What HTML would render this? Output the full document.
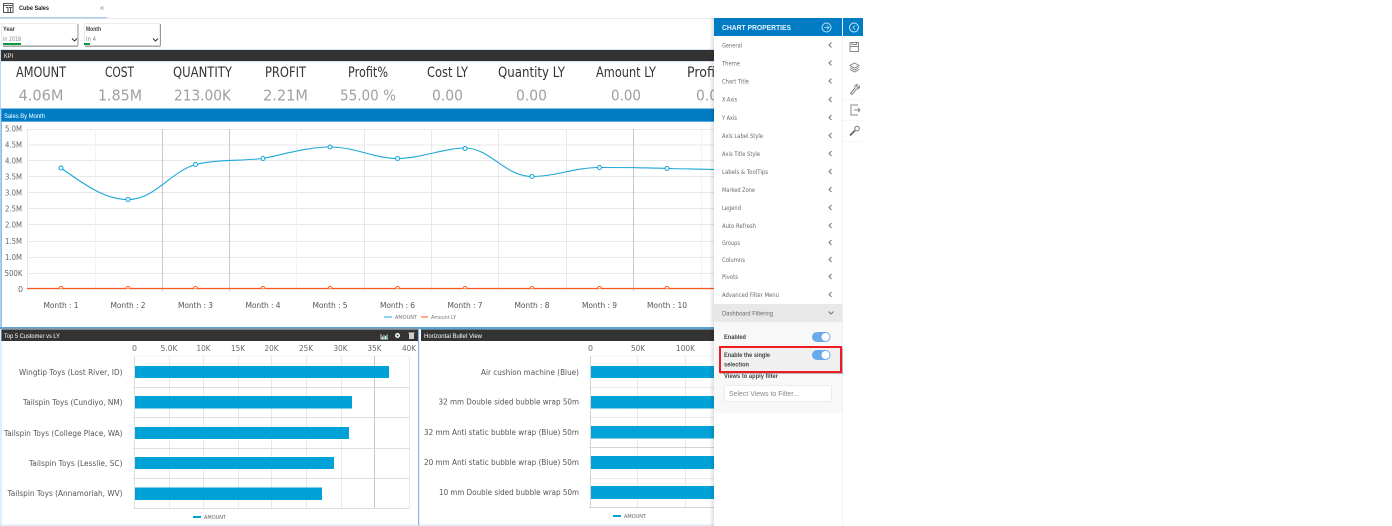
<!DOCTYPE html>
<html><head><meta charset="utf-8"><style>
html,body{margin:0;padding:0;background:#fff;width:1392px;height:526px;overflow:hidden}
svg{display:block;filter:blur(.3px)}
text{font-family:"DejaVu Sans","Liberation Sans",sans-serif}
.k{font-size:14px;fill:#333}
.v{font-size:15px;fill:#a0a0a0}
.y{font-size:8px;fill:#666}
.m{font-size:7.5px;fill:#555}
.l{font-size:8px;fill:#555}
.a{font-size:8px;fill:#666}
.p{font-size:6.5px;fill:#6a6a6a;font-family:"Liberation Sans",sans-serif}
.h{font-size:6.5px;fill:#fff;font-family:"Liberation Sans",sans-serif}
.b{font-size:6.5px;fill:#444;font-weight:bold;font-family:"Liberation Sans",sans-serif}
.g0{stroke:#f3f3f3;stroke-width:1;fill:none}
.g1{stroke:#e8e8e8;stroke-width:1;fill:none}
.g2{stroke:#c8c8c8;stroke-width:1;fill:none}
.ch{fill:none;stroke:#777;stroke-width:1}
.ic{fill:none;stroke:#888;stroke-width:1}
</style></head><body>
<svg width="1392" height="526" viewBox="0 0 1392 526" xmlns="http://www.w3.org/2000/svg">
<defs>
<linearGradient id="sh" x1="0" x2="1" y1="0" y2="0"><stop offset="0" stop-color="#000" stop-opacity="0"/><stop offset="1" stop-color="#000" stop-opacity=".12"/></linearGradient>
<clipPath id="kc"><rect x="0" y="60" width="714" height="50"/></clipPath>
</defs>
<rect width="1392" height="526" fill="#fff"/>

<!-- tab strip -->
<rect x="0" y="18" width="714" height="1" fill="#e8e8e8"/>
<rect x="0" y="17" width="107" height="1.4" fill="#a9cdf0"/>
<path d="M3.5 3.5H13V12.5H3.5Z M3.5 5.5H13 M6 7.5H8V12 M9 7.5H12 M10.5 7.5V12" fill="none" stroke="#555" stroke-width="1"/>
<text x="19" y="10" font-size="6.5" font-weight="bold" fill="#222" textLength="30" lengthAdjust="spacingAndGlyphs" style="font-family:'Liberation Sans',sans-serif">Cube Sales</text>
<path d="M100.5 6.5l3 3m0-3l-3 3" stroke="#bbb" stroke-width="1"/>

<!-- filters -->
<rect x="1.5" y="23.5" width="76" height="22" fill="#fff" stroke="#e2e2e2" stroke-width=".6"/>
<path d="M78 24V45.500" fill="none" stroke="#999" stroke-width="1"/>
<rect x="3" y="45.500" width="75" height="1.500" fill="#aaa"/>
<text x="3" y="31" class="b" textLength="12" lengthAdjust="spacingAndGlyphs">Year</text>
<text x="3" y="41" font-size="6" fill="#888" textLength="18" lengthAdjust="spacingAndGlyphs">In 2018</text>
<rect x="3" y="43" width="18" height="2" fill="#109a46"/>
<path d="M72 38.500l2.500 2.500 2.500-2.500" fill="none" stroke="#333" stroke-width="1"/>
<rect x="84.500" y="23.500" width="75" height="22" fill="#fff" stroke="#e2e2e2" stroke-width=".6"/>
<path d="M160.500 24V45.500" fill="none" stroke="#999" stroke-width="1"/>
<rect x="85" y="45.500" width="75.500" height="1.500" fill="#aaa"/>
<text x="86" y="31" class="b" textLength="15" lengthAdjust="spacingAndGlyphs">Month</text>
<text x="86" y="41" font-size="6" fill="#888" textLength="10" lengthAdjust="spacingAndGlyphs">In 4</text>
<rect x="84" y="43" width="6" height="2" fill="#109a46"/>
<path d="M153 38.500l2.500 2.500 2.500-2.500" fill="none" stroke="#333" stroke-width="1"/>

<!-- KPI -->
<rect x="0" y="49.500" width="714" height="1" fill="#a9cdf0"/>
<rect x="1" y="50" width="713" height="11" fill="#333"/>
<rect x="0" y="61" width="714" height="1" fill="#cfe3f6"/>
<rect x="0" y="50" width="1" height="60" fill="#bcd9f3"/>
<text x="4" y="58" class="h" textLength="9" lengthAdjust="spacingAndGlyphs">KPI</text>
<g clip-path="url(#kc)">
<text x="16" y="77" class="k" textLength="50" lengthAdjust="spacingAndGlyphs">AMOUNT</text>
<text x="105" y="77" class="k" textLength="29" lengthAdjust="spacingAndGlyphs">COST</text>
<text x="173" y="77" class="k" textLength="59" lengthAdjust="spacingAndGlyphs">QUANTITY</text>
<text x="265" y="77" class="k" textLength="41" lengthAdjust="spacingAndGlyphs">PROFIT</text>
<text x="348" y="77" class="k" textLength="40" lengthAdjust="spacingAndGlyphs">Profit%</text>
<text x="427" y="77" class="k" textLength="41" lengthAdjust="spacingAndGlyphs">Cost LY</text>
<text x="498" y="77" class="k" textLength="67" lengthAdjust="spacingAndGlyphs">Quantity LY</text>
<text x="596" y="77" class="k" textLength="60" lengthAdjust="spacingAndGlyphs">Amount LY</text>
<text x="687" y="77" class="k" textLength="50" lengthAdjust="spacingAndGlyphs">Profit LY</text>
<text x="18.500" y="100.500" class="v" textLength="45" lengthAdjust="spacingAndGlyphs">4.06M</text>
<text x="98" y="100.500" class="v" textLength="44" lengthAdjust="spacingAndGlyphs">1.85M</text>
<text x="174" y="100.500" class="v" textLength="57" lengthAdjust="spacingAndGlyphs">213.00K</text>
<text x="263" y="100.500" class="v" textLength="45" lengthAdjust="spacingAndGlyphs">2.21M</text>
<text x="340" y="100.500" class="v" textLength="56" lengthAdjust="spacingAndGlyphs">55.00 %</text>
<text x="432" y="100.500" class="v" textLength="31" lengthAdjust="spacingAndGlyphs">0.00</text>
<text x="516" y="100.500" class="v" textLength="31" lengthAdjust="spacingAndGlyphs">0.00</text>
<text x="611" y="100.500" class="v" textLength="30" lengthAdjust="spacingAndGlyphs">0.00</text>
<text x="696" y="100.500" class="v" textLength="31" lengthAdjust="spacingAndGlyphs">0.00</text>
</g>

<!-- Sales by month -->
<rect x="0" y="108" width="714" height="1" fill="#8ec1ea"/>
<rect x="1" y="109" width="713" height="12" fill="#007cc5"/>
<rect x="1" y="121" width="713" height="1" fill="#5aa9e0"/>
<rect x="0.500" y="109" width="1.200" height="219" fill="#5aa5dc"/>
<text x="4" y="118" class="h" textLength="41" lengthAdjust="spacingAndGlyphs">Sales By Month</text>
<path class="g1" d="M27 129.500H714M27 145H714M27 160.500H714M27 176.500H714M27 192.500H714M27 208.500H714M27 224.500H714M27 241.500H714M27 257.500H714M27 273.500H714"/>
<path class="g0" d="M27 289.500H714M95.500 129V291M296.500 129V291M701.500 129V291"/>
<path class="g1" d="M27.500 129V291M364.500 129V291M431.500 129V291M498.500 129V291M566.500 129V291"/>
<path class="g2" d="M162.500 129V291M229.500 129V291M633.500 129V291"/>
<g class="y">
<text x="5" y="131.500" textLength="17" lengthAdjust="spacingAndGlyphs">5.0M</text>
<text x="5" y="147.500" textLength="17" lengthAdjust="spacingAndGlyphs">4.5M</text>
<text x="5" y="163.500" textLength="17" lengthAdjust="spacingAndGlyphs">4.0M</text>
<text x="5" y="179.500" textLength="17" lengthAdjust="spacingAndGlyphs">3.5M</text>
<text x="5" y="195.500" textLength="17" lengthAdjust="spacingAndGlyphs">3.0M</text>
<text x="5" y="211.500" textLength="17" lengthAdjust="spacingAndGlyphs">2.5M</text>
<text x="5" y="227.500" textLength="17" lengthAdjust="spacingAndGlyphs">2.0M</text>
<text x="5" y="244" textLength="17" lengthAdjust="spacingAndGlyphs">1.5M</text>
<text x="5" y="260" textLength="17" lengthAdjust="spacingAndGlyphs">1.0M</text>
<text x="4.500" y="276" textLength="18" lengthAdjust="spacingAndGlyphs">500K</text>
<text x="18" y="292" textLength="5" lengthAdjust="spacingAndGlyphs">0</text>
</g>
<path d="M61 168C85 185 105 199.500 128 199.500C155 199.500 170 172 195.500 164.500C215 159.500 240 161 263 158.500C285 154 308 147 330 147C355 147 375 158.500 397.500 158.500C420 158.500 445 148 465 148C490 148 505 176.500 532 176.500C555 176.500 575 167.500 599.500 167.500C625 167.500 645 167.500 667 168.500C685 169 700 169 714 169.500" fill="none" stroke="#1ba7d8" stroke-width="1.100"/>
<g fill="#fff" stroke="#0fa3d6" stroke-width="1">
<circle cx="61" cy="168" r="2"/><circle cx="128" cy="199.500" r="2"/><circle cx="195.500" cy="164.500" r="2"/><circle cx="263" cy="158.500" r="2"/><circle cx="330" cy="147" r="2"/><circle cx="397.500" cy="158.500" r="2"/><circle cx="465" cy="148.500" r="2"/><circle cx="532" cy="176.500" r="2"/><circle cx="599.500" cy="167.500" r="2"/><circle cx="667" cy="168.500" r="2"/>
</g>
<path d="M27 288.500H714" stroke="#fb5a1e" stroke-width="1.200"/>
<g fill="#fff" stroke="#fb5a1e" stroke-width="1">
<path d="M59 288.500a2 2 0 0 1 4 0M126 288.500a2 2 0 0 1 4 0M193.500 288.500a2 2 0 0 1 4 0M261 288.500a2 2 0 0 1 4 0M328 288.500a2 2 0 0 1 4 0M395.500 288.500a2 2 0 0 1 4 0M463 288.500a2 2 0 0 1 4 0M530 288.500a2 2 0 0 1 4 0M597.500 288.500a2 2 0 0 1 4 0M665 288.500a2 2 0 0 1 4 0"/>
</g>
<g class="m">
<text x="43.500" y="308" textLength="35" lengthAdjust="spacing">Month : 1</text>
<text x="110.500" y="308" textLength="35" lengthAdjust="spacing">Month : 2</text>
<text x="178" y="308" textLength="35" lengthAdjust="spacing">Month : 3</text>
<text x="245.500" y="308" textLength="35" lengthAdjust="spacing">Month : 4</text>
<text x="312.500" y="308" textLength="35" lengthAdjust="spacing">Month : 5</text>
<text x="380" y="308" textLength="35" lengthAdjust="spacing">Month : 6</text>
<text x="447.500" y="308" textLength="35" lengthAdjust="spacing">Month : 7</text>
<text x="514.500" y="308" textLength="35" lengthAdjust="spacing">Month : 8</text>
<text x="582" y="308" textLength="35" lengthAdjust="spacing">Month : 9</text>
<text x="647" y="308" textLength="40" lengthAdjust="spacing">Month : 10</text>
</g>
<path d="M384 317H392" stroke="#1ba7d8" stroke-width="1"/>
<text x="395" y="319" font-size="5.500" fill="#777" textLength="22" lengthAdjust="spacingAndGlyphs">AMOUNT</text>
<path d="M421 317H428" stroke="#fb5a1e" stroke-width="1"/>
<text x="431" y="319" font-size="5.500" fill="#777" textLength="25" lengthAdjust="spacingAndGlyphs">Amount LY</text>
<rect x="0" y="327" width="714" height="1.200" fill="#5aa5dc"/>
<rect x="0" y="328.200" width="714" height="1" fill="#6f8ea5"/>

<!-- bottom left -->
<rect x="1" y="329.500" width="417" height="11.500" fill="#333"/>
<rect x="0.500" y="329" width="1" height="197" fill="#bcdcf5"/>
<rect x="418" y="329" width="1.200" height="197" fill="#7db8e8"/>
<rect x="0" y="524.500" width="714" height="1" fill="#cfe6f8"/>
<text x="4" y="338" class="h" textLength="56" lengthAdjust="spacingAndGlyphs">Top 5 Customer vs LY</text>
<path d="M381 334V339H388" fill="none" stroke="#fff" stroke-width=".8"/><path d="M382.500 339V336.500M384 339V335M385.500 339V336M387 339V334.500" stroke="#cfe" stroke-width="1"/>
<circle cx="397.500" cy="335.500" r="1.700" fill="none" stroke="#fff" stroke-width="1.500"/>
<path d="M409 333H414V339H409Z" fill="#ccc"/><path d="M408.500 333H414.500" stroke="#ddd"/>
<path class="g0" d="M134.500 356H409.500"/>
<path class="g1" d="M169.500 356V508M203.500 356V508M238.500 356V508M271.500 356V508M306.500 356V508M341.500 356V508M409.500 356V508"/>
<path class="g2" d="M374.500 356V508"/>
<path d="M134.500 356V508M133 387.500H409.500M133 417.500H409.500M133 448.500H409.500M133 478.500H409.500M133 508.500H409.500" fill="none" stroke="#ddd" stroke-width="1"/>
<g fill="#00a2d8">
<rect x="135" y="366" width="254" height="12"/>
<rect x="135" y="396" width="217" height="12.500"/>
<rect x="135" y="427" width="214" height="12"/>
<rect x="135" y="457" width="199" height="12"/>
<rect x="135" y="487.500" width="187" height="12.500"/>
</g>
<g class="a">
<text x="132" y="351" textLength="5" lengthAdjust="spacingAndGlyphs">0</text>
<text x="160.500" y="351" textLength="17" lengthAdjust="spacingAndGlyphs">5.0K</text>
<text x="196.500" y="351" textLength="14" lengthAdjust="spacingAndGlyphs">10K</text>
<text x="231" y="351" textLength="14" lengthAdjust="spacingAndGlyphs">15K</text>
<text x="264.500" y="351" textLength="14" lengthAdjust="spacingAndGlyphs">20K</text>
<text x="299" y="351" textLength="14" lengthAdjust="spacingAndGlyphs">25K</text>
<text x="333.500" y="351" textLength="14" lengthAdjust="spacingAndGlyphs">30K</text>
<text x="367.500" y="351" textLength="14" lengthAdjust="spacingAndGlyphs">35K</text>
<text x="402" y="351" textLength="14" lengthAdjust="spacingAndGlyphs">40K</text>
</g>
<g class="l">
<text x="19" y="375" textLength="103.500" lengthAdjust="spacingAndGlyphs">Wingtip Toys (Lost River, ID)</text>
<text x="23" y="405" textLength="99.500" lengthAdjust="spacingAndGlyphs">Tailspin Toys (Cundiyo, NM)</text>
<text x="4" y="436" textLength="118.500" lengthAdjust="spacingAndGlyphs">Tailspin Toys (College Place, WA)</text>
<text x="29" y="466" textLength="93.500" lengthAdjust="spacingAndGlyphs">Tailspin Toys (Lesslie, SC)</text>
<text x="7.500" y="496" textLength="115" lengthAdjust="spacingAndGlyphs">Tailspin Toys (Annamoriah, WV)</text>
</g>
<rect x="193" y="516" width="8" height="2" fill="#00a2d8"/>
<text x="204" y="519" font-size="5.500" fill="#666" textLength="22" lengthAdjust="spacingAndGlyphs">AMOUNT</text>

<!-- bottom right -->
<rect x="421" y="329.500" width="293" height="11.500" fill="#333"/>
<rect x="420" y="328" width="294" height="1.200" fill="#5aa5dc"/>
<text x="424" y="338" class="h" textLength="58" lengthAdjust="spacingAndGlyphs">Horizontal Bullet View</text>
<path class="g1" d="M637.500 356V508M685.500 356V508M589 387.500H714M589 417.500H714M589 478.500H714"/>
<path class="g0" d="M590.500 356H714"/>
<path d="M590.500 356V508M589 447.500H714M589 507.500H714" fill="none" stroke="#d4d4d4" stroke-width="1"/>
<g fill="#00a2d8">
<rect x="591" y="366" width="123" height="12"/>
<rect x="591" y="396" width="123" height="12.500"/>
<rect x="591" y="426" width="123" height="12.500"/>
<rect x="591" y="456" width="123" height="13"/>
<rect x="591" y="486" width="123" height="13"/>
</g>
<g class="a">
<text x="588" y="351" textLength="5" lengthAdjust="spacingAndGlyphs">0</text>
<text x="631" y="351" textLength="14" lengthAdjust="spacingAndGlyphs">50K</text>
<text x="676" y="351" textLength="19" lengthAdjust="spacingAndGlyphs">100K</text>
</g>
<g class="l">
<text x="481" y="375" textLength="98" lengthAdjust="spacingAndGlyphs">Air cushion machine (Blue)</text>
<text x="438.500" y="404.500" textLength="140.500" lengthAdjust="spacingAndGlyphs">32 mm Double sided bubble wrap 50m</text>
<text x="424" y="435" textLength="155" lengthAdjust="spacingAndGlyphs">32 mm Anti static bubble wrap (Blue) 50m</text>
<text x="424" y="465" textLength="155" lengthAdjust="spacingAndGlyphs">20 mm Anti static bubble wrap (Blue) 50m</text>
<text x="439" y="495" textLength="140" lengthAdjust="spacingAndGlyphs">10 mm Double sided bubble wrap 50m</text>
</g>
<rect x="613" y="515" width="8" height="2" fill="#00a2d8"/>
<text x="624" y="518" font-size="5.500" fill="#666" textLength="22" lengthAdjust="spacingAndGlyphs">AMOUNT</text>

<!-- panel -->
<rect x="709" y="18" width="5" height="508" fill="url(#sh)"/>
<rect x="714" y="18" width="128" height="508" fill="#fff"/>
<rect x="842" y="18" width="1" height="508" fill="#eaf3fb"/>
<rect x="714" y="18" width="128" height="18" fill="#007cc5"/>
<text x="722" y="30" font-size="7.500" font-weight="bold" fill="#e4f2fb" textLength="69" lengthAdjust="spacingAndGlyphs" style="font-family:'Liberation Sans',sans-serif">CHART PROPERTIES</text>
<circle cx="826.500" cy="27.500" r="4.500" fill="none" stroke="#bfe0f5" stroke-width="1"/><path d="M824 27.500h5M827 25.500l2 2-2 2" fill="none" stroke="#bfe0f5" stroke-width=".8"/>
<g class="p">
<text x="722" y="47.500" textLength="20" lengthAdjust="spacingAndGlyphs">General</text>
<text x="722" y="65.500" textLength="18" lengthAdjust="spacingAndGlyphs">Theme</text>
<text x="722" y="83.500" textLength="27" lengthAdjust="spacingAndGlyphs">Chart Title</text>
<text x="722" y="101.500" textLength="15" lengthAdjust="spacingAndGlyphs">X Axis</text>
<text x="722" y="120" textLength="15" lengthAdjust="spacingAndGlyphs">Y Axis</text>
<text x="722" y="138" textLength="41" lengthAdjust="spacingAndGlyphs">Axis Label Style</text>
<text x="722" y="156" textLength="38" lengthAdjust="spacingAndGlyphs">Axis Title Style</text>
<text x="722" y="174" textLength="46" lengthAdjust="spacingAndGlyphs">Labels &amp; ToolTips</text>
<text x="722" y="192" textLength="33" lengthAdjust="spacingAndGlyphs">Marked Zone</text>
<text x="722" y="210" textLength="19" lengthAdjust="spacingAndGlyphs">Legend</text>
<text x="722" y="228" textLength="34" lengthAdjust="spacingAndGlyphs">Auto Refresh</text>
<text x="722" y="245" textLength="18" lengthAdjust="spacingAndGlyphs">Groups</text>
<text x="722" y="262" textLength="23" lengthAdjust="spacingAndGlyphs">Columns</text>
<text x="722" y="279" textLength="16" lengthAdjust="spacingAndGlyphs">Pivots</text>
<text x="722" y="297" textLength="57" lengthAdjust="spacingAndGlyphs">Advanced Filter Menu</text>
</g>
<path class="ch" d="M831.500 42.500l-2.500 2.500 2.500 2.500M831.500 60.500l-2.500 2.500 2.500 2.500M831.500 78.500l-2.500 2.500 2.500 2.500M831.500 97l-2.500 2.500 2.500 2.500M831.500 115l-2.500 2.500 2.500 2.500M831.500 133l-2.500 2.500 2.500 2.500M831.500 151l-2.500 2.500 2.500 2.500M831.500 169l-2.500 2.500 2.500 2.500M831.500 187l-2.500 2.500 2.500 2.500M831.500 205l-2.500 2.500 2.500 2.500M831.500 223l-2.500 2.500 2.500 2.500M831.500 240l-2.500 2.500 2.500 2.500M831.500 257l-2.500 2.500 2.500 2.500M831.500 274l-2.500 2.500 2.500 2.500M831.500 292l-2.500 2.500 2.500 2.500"/>
<rect x="714" y="304" width="128" height="18" fill="#e8e8e8"/>
<text x="722" y="315.500" class="p" textLength="51" lengthAdjust="spacingAndGlyphs">Dashboard Filtering</text>
<path class="ch" d="M828.500 311.500l2.500 2.500 2.500-2.500"/>
<rect x="714" y="322" width="128" height="91" fill="#f8f8f8"/>
<text x="724" y="339" class="b" textLength="22" lengthAdjust="spacingAndGlyphs">Enabled</text>
<rect x="812" y="332" width="18.500" height="10" rx="5" fill="#6aa9ec"/><circle cx="825.500" cy="337" r="4" fill="#fff"/>
<rect x="720" y="347" width="121" height="25" fill="#f0f0f0" stroke="#ed1c24" stroke-width="2"/>
<path d="M720 373.500H842.500V348" fill="none" stroke="#777" stroke-width="1" opacity=".5"/>
<text x="724" y="357" class="b" textLength="46" lengthAdjust="spacingAndGlyphs">Enable the single</text>
<text x="724" y="366.500" class="b" textLength="25" lengthAdjust="spacingAndGlyphs">selection</text>
<rect x="812" y="350" width="18.500" height="10" rx="5" fill="#6aa9ec"/><circle cx="825.500" cy="355" r="4" fill="#fff"/>
<text x="724" y="378" class="b" textLength="54" lengthAdjust="spacingAndGlyphs">Views to apply filter</text>
<rect x="724.500" y="385.500" width="107" height="16" fill="#fff" stroke="#ececec"/>
<text x="729" y="396" font-size="7.500" fill="#888" textLength="70" lengthAdjust="spacingAndGlyphs" style="font-family:'Liberation Sans',sans-serif">Select Views to Filter...</text>

<!-- icon strip -->
<rect x="843" y="18" width="20" height="18" fill="#007cc5"/>
<circle cx="854" cy="27.500" r="4.500" fill="none" stroke="#cfe8f7" stroke-width="1"/><path d="M855 25.500l-2 2 2 2" fill="none" stroke="#cfe8f7" stroke-width=".8"/>
<path class="ic" d="M850 42.500H858.500V51.500H850ZM850 46.500H858.500M852 42.500V44.500H856.500V42.500"/>
<path class="ic" d="M854.500 63l4.500 2.500-4.500 2.500-4.500-2.500ZM850 67.500l4.500 2.500 4.500-2.500M850 69.500l4.500 2.500 4.500-2.500"/>
<path class="ic" d="M850.500 93.500l4.500-5.500c-.7-2 .5-3.500 2.500-3.500l-1 2 1.500 1 1.500-1.500c.3 2-1.300 3.300-3 3l-4.500 5.500Z"/>
<path class="ic" d="M858 105H851V115H858M854 110H860M858 108l2 2-2 2"/>
<path d="M850 135.500l5-5" stroke="#666" stroke-width="1.800"/><circle cx="857" cy="128.500" r="2.300" fill="none" stroke="#777" stroke-width="1"/>
<path d="M843 99.500H863M843 120.500H863M843 141.500H863" stroke="#f6f6f6" stroke-width="1"/>
</svg>
</body></html>
